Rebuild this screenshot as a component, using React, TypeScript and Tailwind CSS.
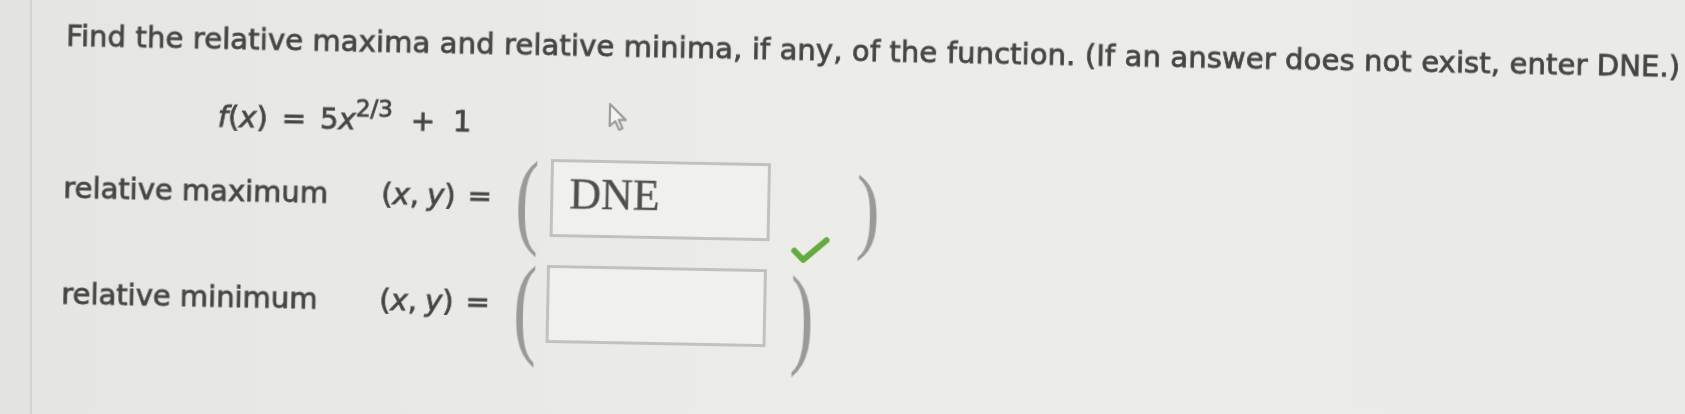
import * as React from "react";

const sans = "font-['DejaVu_Sans','Verdana',sans-serif]";

function Paren({ ch, className }: { ch: string; className?: string }) {
  return (
    <div
      className={
        "flex h-[62px] w-[20px] shrink-0 items-center justify-center font-['Liberation_Serif',serif] text-[70px] leading-[0.88] text-[#9a9a97] [-webkit-text-stroke:0px] " +
        (className ?? "")
      }
    >
      {ch}
    </div>
  );
}

function Cursor() {
  return (
    <svg width="22" height="30" viewBox="0 0 22 30" className="-translate-y-[8px]">
      <path
        d="M2 2 L2 24 L7.5 19 L11.5 27.5 L14.8 26 L11 17.6 L18 17.6 Z"
        fill="#f4f4f2"
        stroke="#9b9b99"
        strokeWidth="2.2"
        strokeLinejoin="round"
      />
    </svg>
  );
}

function Check() {
  return (
    <svg width="42" height="30" viewBox="0 0 42 30">
      <path
        d="M5 16 L14 25 L37 5"
        fill="none"
        stroke="#63aa3f"
        strokeWidth="6"
        strokeLinecap="round"
        strokeLinejoin="round"
      />
    </svg>
  );
}

function AnswerBox({ value }: { value?: string }) {
  return (
    <div className="flex h-[78px] w-[220px] shrink-0 items-center border-[3px] border-[#c1c1be] bg-[#f0f0ed] pb-[8px] pl-[16px]">
      {value && (
        <span className="font-['Liberation_Serif',serif] text-[44px] leading-none text-[#4e4e4c] [-webkit-text-stroke:0.4px_#666]">
          {value}
        </span>
      )}
    </div>
  );
}

function XY() {
  return (
    <div className="flex w-[136px] shrink-0 items-baseline text-[29px] text-[#434341]">
      <span>(</span>
      <span className="italic">x</span>
      <span>,</span>
      <span className="ml-[8px] italic">y</span>
      <span>)</span>
      <span className="ml-[12px]">=</span>
    </div>
  );
}

export default function App() {
  return (
    <div
      className={
        "flex h-[414px] w-full overflow-hidden bg-gradient-to-r from-[#e5e5e1] via-[#ecece9] to-[#eaeae6] " +
        sans
      }
    >
      {/* left margin strip */}
      <div className="h-full w-[32px] shrink-0 border-r-2 border-[#d4d4d0] bg-[#e3e3df]" />

      <div className="flex origin-top-left rotate-[1.1deg] flex-col pl-[35px] pt-[18px] text-[#434341] blur-[0.5px] [-webkit-text-stroke:0.9px_#505050]">
        <p className="m-0 whitespace-nowrap text-[29px] leading-[34px] tracking-[0.12px]">
          Find the relative maxima and relative minima, if any, of the function. (If an answer does not exist, enter DNE.)
        </p>

        {/* function */}
        <div className="ml-[153px] mt-[45px] flex h-[34px] items-center">
          <div className="flex w-[390px] items-baseline text-[29px] leading-[34px]">
            <span className="italic">f</span>
            <span>(</span>
            <span className="italic">x</span>
            <span>)</span>
            <span className="mx-[14px]">=</span>
            <span>5</span>
            <span className="italic">x</span>
            <span className="relative -top-[13px] text-[23px]">2/3</span>
            <span className="mx-[18px]">+</span>
            <span>1</span>
          </div>
          <Cursor />
        </div>

        {/* relative maximum */}
        <div className="mt-[18px] flex h-[78px] items-center">
          <div className="w-[318px] shrink-0 text-[29px]">relative maximum</div>
          <XY />
          <Paren ch="(" className="translate-y-[2px] scale-y-[1.5]" />
          <div className="relative ml-[13px]">
            <AnswerBox value="DNE" />
            <div className="absolute left-[240px] top-[71px]">
              <Check />
            </div>
          </div>
          <Paren ch=")" className="ml-[88px] translate-y-[6px] scale-y-[1.35]" />
        </div>

        {/* relative minimum */}
        <div className="mt-[28px] flex h-[78px] items-center">
          <div className="w-[318px] shrink-0 text-[29px]">relative minimum</div>
          <XY />
          <Paren ch="(" className="translate-y-[3px] scale-y-[1.6]" />
          <div className="ml-[11px]">
            <AnswerBox />
          </div>
          <Paren ch=")" className="ml-[26px] translate-y-[8px] scale-y-[1.6]" />
        </div>
      </div>
    </div>
  );
}
